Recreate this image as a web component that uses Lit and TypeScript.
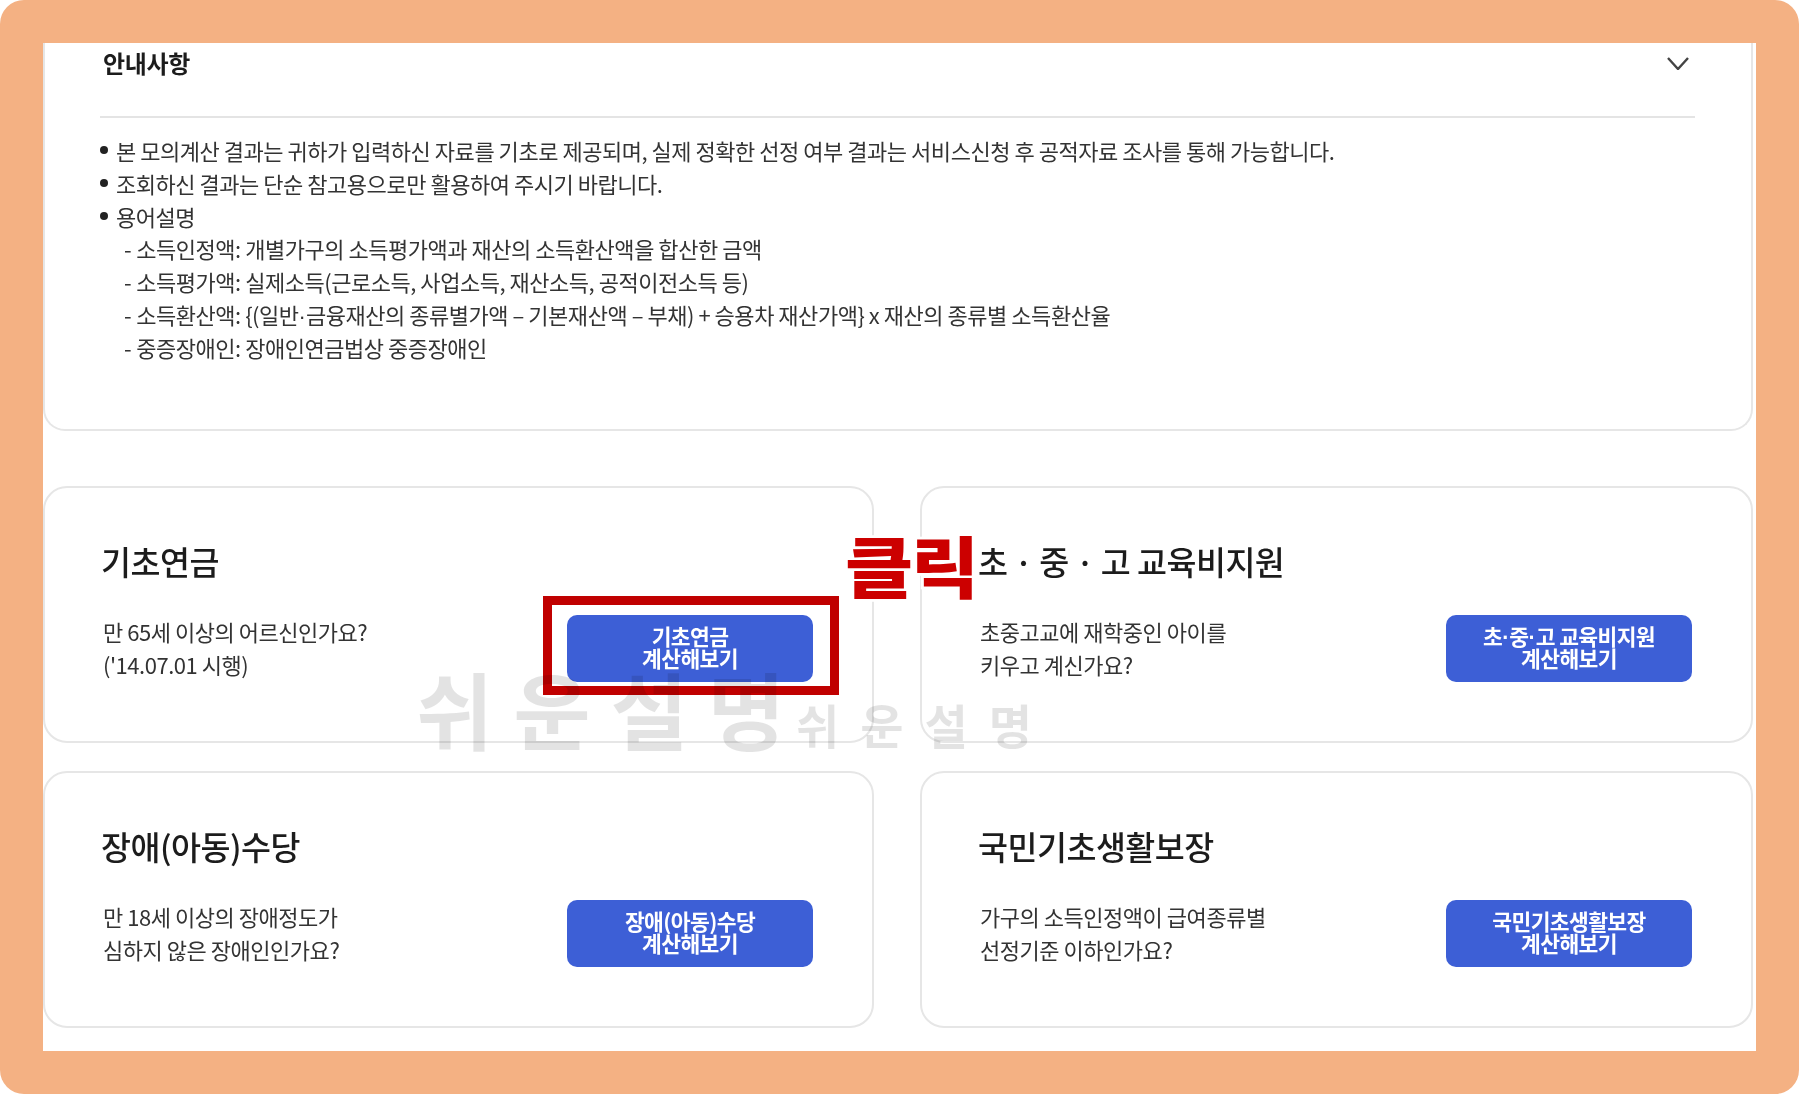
import { LitElement, html, css } from "lit";
import { customElement } from "lit/decorators.js";

const dot = html`<span class="mid">·</span>`;

const CARDS = [
  { title: html`기초연금`, desc: ["만 65세 이상의 어르신인가요?", "('14.07.01 시행)"], btn: html`기초연금` },
  { title: html`초 · 중 · 고 교육비지원`, desc: ["초중고교에 재학중인 아이를", "키우고 계신가요?"], btn: html`초${dot}중${dot}고 교육비지원` },
  { title: html`장애(아동)수당`, desc: ["만 18세 이상의 장애정도가", "심하지 않은 장애인인가요?"], btn: html`장애(아동)수당` },
  { title: html`국민기초생활보장`, desc: ["가구의 소득인정액이 급여종류별", "선정기준 이하인가요?"], btn: html`국민기초생활보장` },
];

const BULLETS = [
  "본 모의계산 결과는 귀하가 입력하신 자료를 기초로 제공되며, 실제 정확한 선정 여부 결과는 서비스신청 후 공적자료 조사를 통해 가능합니다.",
  "조회하신 결과는 단순 참고용으로만 활용하여 주시기 바랍니다.",
  "용어설명",
];
const TERMS = [
  html`소득인정액: 개별가구의 소득평가액과 재산의 소득환산액을 합산한 금액`,
  html`소득평가액: 실제소득(근로소득, 사업소득, 재산소득, 공적이전소득 등)`,
  html`소득환산액: {(일반${dot}금융재산의 종류별가액 – 기본재산액 – 부채) + 승용차 재산가액} x 재산의 종류별 소득환산율`,
  html`중증장애인: 장애인연금법상 중증장애인`,
];

@customElement("app-root")
export class AppRoot extends LitElement {
  static styles = css`
    :host {
      display: block;
      width: 1799px;
      height: 1094px;
      background: #fff;
      font-family: "Noto Sans CJK KR", "Noto Sans", sans-serif;
      color: #333;
    }
    * { box-sizing: border-box; }
    .frame {
      position: relative;
      width: 1799px;
      height: 1094px;
      padding: 43px;
      background: #f4b183;
      border-radius: 24px;
      overflow: hidden;
    }
    .page {
      width: 1713px;
      height: 1008px;
      background: #fff;
      padding-right: 3px;
      display: flex;
      flex-direction: column;
    }
    .soft { filter: blur(0.35px); }
    .mid {
      font-family: "Liberation Sans", sans-serif;
      letter-spacing: 0;
      line-height: 0;
    }
    .notice {
      height: 388px;
      border: 2px solid #e6e6e6;
      border-top: none;
      border-radius: 0 0 22px 22px;
      padding: 0 56px 0 55px;
    }
    .notice-head {
      height: 75px;
      border-bottom: 2px solid #e4e4e4;
      padding: 0 6px 33px 3px;
      display: flex;
      align-items: center;
      justify-content: space-between;
    }
    .notice-title {
      font-size: 24px;
      font-weight: 700;
      line-height: 40px;
      letter-spacing: -0.3px;
      color: #1c1c1c;
    }
    .chev { width: 22px; height: 13px; display: block; }
    .list {
      list-style: none;
      margin: 16px 0 0;
      padding: 0;
      font-size: 22px;
      line-height: 32.8px;
      letter-spacing: -0.47px;
      color: #333;
      white-space: nowrap;
    }
    .list li { display: flex; align-items: center; gap: 8px; }
    .dot { width: 8px; height: 8px; border-radius: 50%; background: #222; flex: none; }
    .list li.term { padding-left: 24px; gap: 5px; }
    .grid {
      margin-top: 55px;
      display: grid;
      grid-template-columns: 831px 833px;
      grid-template-rows: 257px 257px;
      column-gap: 46px;
      row-gap: 28px;
    }
    .card {
      border: 2px solid #e6e6e6;
      border-radius: 24px;
      padding: 53px 59px 0 58px;
    }
    .card-title {
      font-size: 32.6px;
      font-weight: 500;
      line-height: 40px;
      letter-spacing: -0.5px;
      color: #1c1c1c;
      white-space: nowrap;
      margin-left: -2px;
    }
    .card-body {
      margin-top: 34px;
      display: flex;
      justify-content: space-between;
      align-items: flex-start;
    }
    .desc {
      font-size: 22px;
      line-height: 33px;
      letter-spacing: -0.47px;
      color: #333;
    }
    .desc div { white-space: nowrap; }
    .btn {
      width: 246px;
      height: 67px;
      border: none;
      border-radius: 10px;
      background: #3d5fd6;
      color: #fff;
      font-family: inherit;
      font-size: 21.5px;
      font-weight: 700;
      line-height: 22px;
      letter-spacing: -0.6px;
      text-align: center;
      padding: 0 0 4px;
    }
    .redbox {
      position: absolute;
      left: 543px;
      top: 596px;
      width: 296px;
      height: 99px;
      border: 9px solid #c00000;
    }
    .click {
      position: absolute;
      left: 845px;
      top: 514px;
      font-size: 74px;
      line-height: 100px;
      font-weight: 900;
      letter-spacing: -2px;
      color: #cc0000;
      -webkit-text-stroke: 6px #fff;
      paint-order: stroke fill;
      white-space: nowrap;
      transform: scaleY(0.9);
    }
    .wm {
      position: absolute;
      color: rgba(0, 0, 0, 0.11);
      font-weight: 700;
      white-space: nowrap;
    }
    .wm.big { left: 416px; top: 653px; font-size: 84px; line-height: 110px; letter-spacing: 20px; }
    .wm.small { left: 796px; top: 689px; font-size: 47px; line-height: 70px; letter-spacing: 21px; }
  `;

  render() {
    return html`
      <div class="frame">
        <div class="page">
          <section class="notice">
            <div class="notice-head">
              <div class="notice-title soft">안내사항</div>
              <svg class="chev" viewBox="0 0 22 13" fill="none">
                <path d="M1 1 L11 12 L21 1" stroke="#444" stroke-width="2.4" />
              </svg>
            </div>
            <ul class="list soft">
              ${BULLETS.map((t) => html`<li><span class="dot"></span><span>${t}</span></li>`)}
              ${TERMS.map((t) => html`<li class="term"><span>-</span><span>${t}</span></li>`)}
            </ul>
          </section>
          <div class="grid">
            ${CARDS.map(
              (c) => html`
                <article class="card">
                  <div class="card-title soft">${c.title}</div>
                  <div class="card-body">
                    <div class="desc soft">${c.desc.map((d) => html`<div>${d}</div>`)}</div>
                    <button class="btn soft">${c.btn}<br />계산해보기</button>
                  </div>
                </article>
              `
            )}
          </div>
        </div>
        <div class="redbox"></div>
        <div class="click">클릭</div>
        <div class="wm big soft">쉬운설명</div>
        <div class="wm small soft">쉬운설명</div>
      </div>
    `;
  }
}
